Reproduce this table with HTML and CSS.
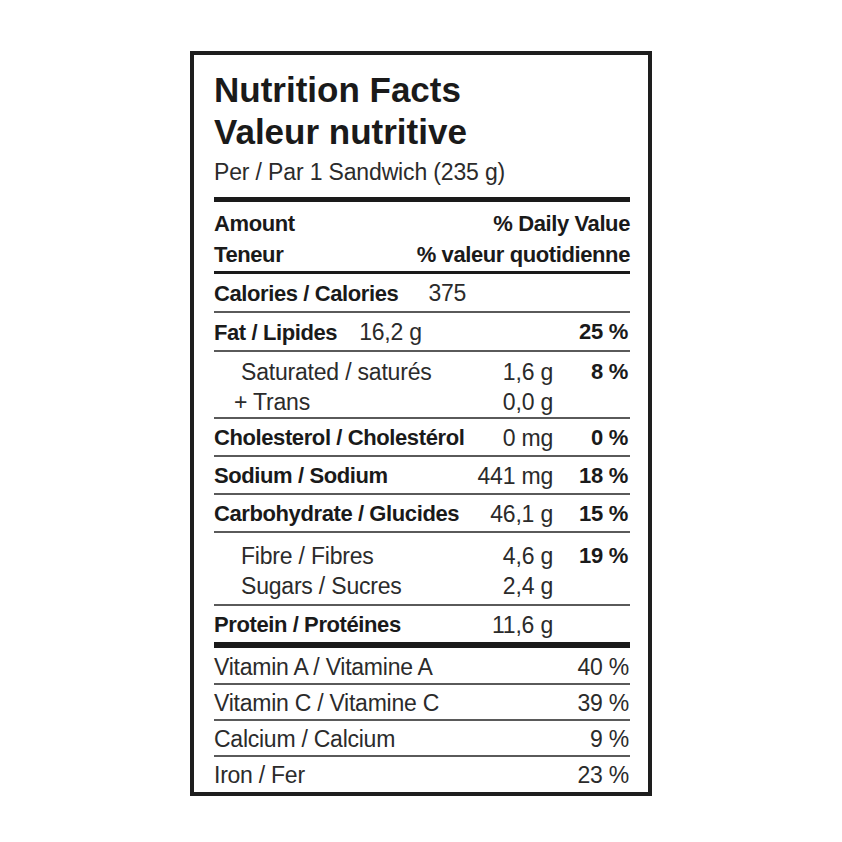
FILE: index.html
```html
<!DOCTYPE html>
<html lang="en">
<head>
<meta charset="utf-8">
<title>Nutrition Facts</title>
<link rel="stylesheet" href="styles.css">
</head>
<body>
<div class="page">
  <section class="label">
    <h1 class="title"><span>Nutrition Facts</span><span>Valeur nutritive</span></h1>
    <p class="serving">Per / Par 1 Sandwich (235 g)</p>
    <div class="head">
      <span>Amount</span><span class="r">% Daily Value</span>
      <span>Teneur</span><span class="r">% valeur quotidienne</span>
    </div>
    <div class="nutrients">
      <div class="row"><span class="b">Calories / Calories<span class="val val-wide">375</span></span><span></span><span></span></div>
      <div class="row"><span class="b">Fat / Lipides<span class="val">16,2 g</span></span><span></span><span class="pct">25 %</span></div>
      <div class="row row-sat">
        <span class="sub">Saturated / saturés</span><span class="amt">1,6 g</span><span class="pct">8 %</span>
        <span class="sub-trans">+ Trans</span><span class="amt">0,0 g</span><span></span>
      </div>
      <div class="row"><span class="b">Cholesterol / Cholestérol</span><span class="amt">0 mg</span><span class="pct">0 %</span></div>
      <div class="row"><span class="b">Sodium / Sodium</span><span class="amt">441 mg</span><span class="pct">18 %</span></div>
      <div class="row"><span class="b">Carbohydrate / Glucides</span><span class="amt">46,1 g</span><span class="pct">15 %</span></div>
      <div class="row row-fibre">
        <span class="sub">Fibre / Fibres</span><span class="amt">4,6 g</span><span class="pct">19 %</span>
        <span class="sub">Sugars / Sucres</span><span class="amt">2,4 g</span><span></span>
      </div>
      <div class="row"><span class="b">Protein / Protéines</span><span class="amt">11,6 g</span><span></span></div>
    </div>
    <div class="vitamins">
      <div class="vrow"><span>Vitamin A / Vitamine A</span><span class="vpct">40 %</span></div>
      <div class="vrow"><span>Vitamin C / Vitamine C</span><span class="vpct">39 %</span></div>
      <div class="vrow"><span>Calcium / Calcium</span><span class="vpct">9 %</span></div>
      <div class="vrow"><span>Iron / Fer</span><span class="vpct">23 %</span></div>
    </div>
  </section>
</div>
</body>
</html>
```

FILE: styles.css
```css
html, body {
  margin: 0;
  padding: 0;
  background: #ffffff;
}

body {
  font-family: "Liberation Sans", Arial, sans-serif;
  color: #2b2b2b;
}

.page {
  padding-top: 51px;
}

.label {
  box-sizing: border-box;
  width: 462px;
  margin: 0 auto;
  border: 4px solid #1e1e1e;
  padding: 14px 18px 1px 20px;
}

.title {
  margin: 0;
  font-size: 35px;
  line-height: 42px;
  font-weight: 700;
  color: #1a1a1a;
}

.title span {
  display: block;
}

.serving {
  margin: 6px 0 0;
  font-size: 23px;
  line-height: 26px;
  letter-spacing: -0.15px;
}

.head {
  margin-top: 12px;
  border-top: 5px solid #1a1a1a;
  border-bottom: 3px solid #1a1a1a;
  padding: 6px 0 1px;
  display: grid;
  grid-template-columns: 1fr auto;
  font-weight: 700;
  font-size: 22px;
  line-height: 31px;
  letter-spacing: -0.4px;
  color: #1a1a1a;
}

.head .r {
  text-align: right;
}

.row {
  display: grid;
  grid-template-columns: 1fr auto 77px;
  padding: 4px 0 2px;
  font-size: 23px;
  line-height: 30px;
  letter-spacing: -0.2px;
  border-bottom: 2px solid #5a5a5a;
  white-space: nowrap;
}

.row:last-child {
  border-bottom: 6px solid #1a1a1a;
}

.row-sat {
  padding: 5px 0 0;
}

.row-fibre {
  padding: 8px 0 3px;
}

.b {
  font-weight: 700;
  font-size: 22px;
  letter-spacing: -0.4px;
  color: #1a1a1a;
}

.val {
  font-weight: 400;
  font-size: 23px;
  letter-spacing: -0.2px;
  color: #2b2b2b;
  margin-left: 22px;
}

.val-wide {
  margin-left: 30px;
}

.sub {
  padding-left: 27px;
}

.sub-trans {
  padding-left: 20px;
}

.amt {
  text-align: right;
}

.pct {
  text-align: right;
  padding-right: 2px;
  font-weight: 700;
  font-size: 22px;
  letter-spacing: -0.3px;
  color: #1a1a1a;
}

.vitamins {
  padding-top: 1px;
}

.vrow {
  display: grid;
  grid-template-columns: 1fr auto;
  padding: 3px 0 1px;
  font-size: 23px;
  line-height: 30px;
  letter-spacing: -0.25px;
  border-bottom: 2px solid #5a5a5a;
}

.vrow:last-child {
  border-bottom: none;
}

.vpct {
  text-align: right;
  padding-right: 1px;
}
```
